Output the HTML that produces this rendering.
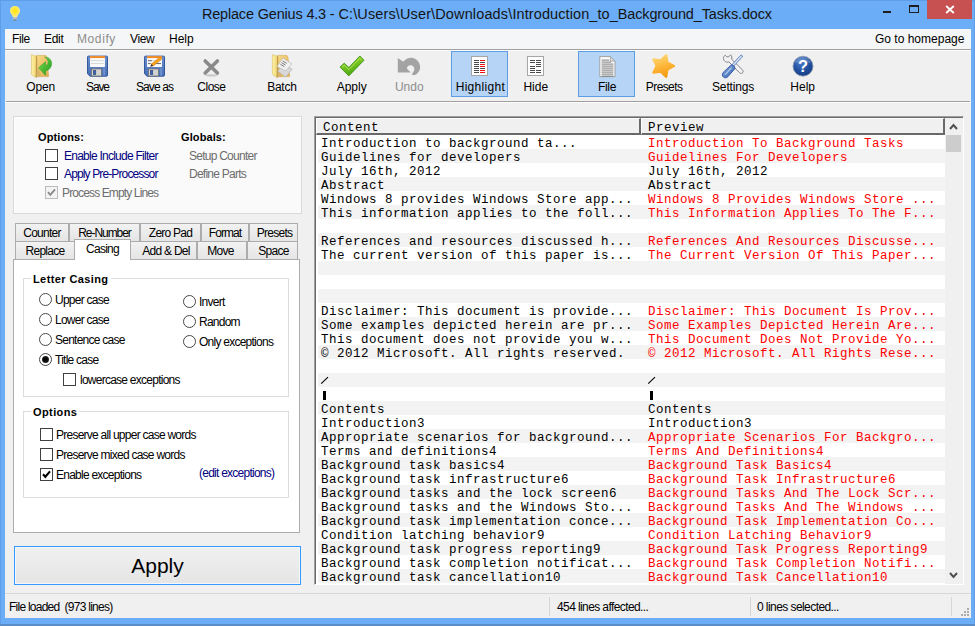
<!DOCTYPE html>
<html lang="en">
<head>
<meta charset="utf-8">
<title>Replace Genius 4.3</title>
<style>
*{box-sizing:border-box;margin:0;padding:0}
html,body{width:975px;height:626px;overflow:hidden}
body{position:relative;background:#6BADF6;font-family:"Liberation Sans",sans-serif;font-size:11px;color:#000;line-height:1}
.abs{position:absolute}
svg{display:block}
#bottomedge{left:0;top:624px;width:975px;height:2px;background:#5B8DC8}
#frame{left:0;top:0;width:975px;height:625px;border:1px solid #5F9EE6;border-bottom:none}
#title{left:0;top:4px;width:975px;height:20px;font-size:14.45px;line-height:20px;white-space:pre;color:#141414}
#title span{position:absolute;top:0}
#client{left:5px;top:29px;width:966px;height:589px;background:#F0F0F0}
#menubar{left:5px;top:29px;width:966px;height:20px;background:#F5F6F7}
.mi{position:absolute;top:32px;font-size:12px;line-height:14px;white-space:nowrap}
#gohome{left:875px}
.hl{left:5px;width:966px;height:1px}
.tl{position:absolute;top:80px;width:80px;height:14px;text-align:center;font-size:12px;line-height:14px;white-space:nowrap}
.tbon{background:#B6D4F6;border:1px solid #5C9DE3}
.dis{color:#8D8D8D}
#optbox{left:13px;top:116px;width:289px;height:98px;background:#FAFAFA;border:1px solid #D9D9D9;box-shadow:inset 1px 1px 0 #FFF}
.cb{position:absolute;width:13px;height:13px;background:#FFF;border:1px solid #404040}
.cb.d{border-color:#BCBCBC;background:#F3F3F3}
.cb svg{position:absolute;left:0;top:0}
.rb{position:absolute;width:13px;height:13px;background:#FFF;border:1px solid #484848;border-radius:50%}
.rb.sel:after{content:"";position:absolute;left:2px;top:2px;width:7px;height:7px;border-radius:50%;background:radial-gradient(#000 0,#111 55%,#777 100%)}
.t{position:absolute;white-space:nowrap;font-size:12px;line-height:13px;letter-spacing:-0.75px;transform:translateY(0.6px)}
.b{font-weight:bold;font-size:11px;letter-spacing:0.1px}
.navy{color:#000080}
.gr{color:#6D6D6D}
.tab{position:absolute;height:18px;border:1px solid #ACACAC;border-bottom:none;background:linear-gradient(#F2F2F2,#E4E4E4);text-align:center;font-size:12px;letter-spacing:-0.75px;line-height:17px;white-space:nowrap}
.tab.sel{background:#FFF}
#tabpage{left:13px;top:259px;width:287px;height:274px;background:#FFF;border:1px solid #ACACAC}
.gb{position:absolute;border:1px solid #DCDCDC}
.gbl{position:absolute;background:#FFF;padding:0 2px;font-weight:bold;font-size:11px;letter-spacing:0.4px;line-height:14px;white-space:nowrap}
#applybtn{left:14px;top:546px;width:287px;height:39px;border:1px solid #3399FF;background:linear-gradient(#F0F0F0,#E5E5E5);text-align:center;font-size:21px;line-height:37px;box-shadow:inset 0 0 0 1px #F4F8FC}
#lv{left:314px;top:116px;width:650px;height:469px;border:1px solid #A0A0A0;border-right-color:#FFF;border-bottom-color:#FFF;background:#FFF}
#lvin{left:315px;top:117px;width:648px;height:467px;border:1px solid #696969;border-right:none;border-bottom:none;background:#FFF}
.hd{position:absolute;top:118px;height:17px;background:#F0F0F0;border-top:1px solid #FFF;border-left:1px solid #FFF;border-right:2px solid #696969;border-bottom:2px solid #696969;font-family:"Liberation Mono",monospace;font-size:12.5px;letter-spacing:0.5px;line-height:14px;white-space:pre;padding-left:6px;padding-top:2px}
.row{position:absolute;left:318px;width:627px;height:14px}
.row.g{background:#F3F3F3}
.c{position:absolute;height:14px;font-family:"Liberation Mono",monospace;font-size:12.5px;letter-spacing:0.5px;line-height:14px;white-space:pre;color:#000;margin-top:2px;margin-left:1px}
.r{color:#FF0000}
#sb{left:945px;top:118px;width:18px;height:466px;background:#F0F0F0}
#thumb{left:946px;top:135px;width:15px;height:17px;background:#CDCDCD}
.sep{position:absolute;top:597px;width:1px;height:19px;background:#D7D7D7}
</style>
</head>
<body>
<div id="frame" class="abs"></div><div id="bottomedge" class="abs"></div>
<div id="title" class="abs"><span style="left:201.9px;letter-spacing:-0.15px">Replace Genius 4.3 - </span><span style="left:338.4px;letter-spacing:0.16px">C:\Users\User\Downloads\</span><span style="left:512.4px;letter-spacing:0.12px">Introduction_to_</span><span style="left:617.8px;letter-spacing:-0.11px">Background_Tasks.docx</span></div>
<svg class="abs" style="left:9px;top:5px" width="12" height="17" viewBox="0 0 12 17" ><defs><radialGradient id="bg" cx="0.5" cy="0.45" r="0.6"><stop offset="0" stop-color="#FFE600"/><stop offset="0.6" stop-color="#FFE75A"/><stop offset="1" stop-color="#FBF0A8"/></radialGradient></defs><path d="M6 1 C2.5 1 1 3.6 1 5.8 C1 8.3 3.2 9.6 3.9 12 L8.1 12 C8.8 9.6 11 8.3 11 5.8 C11 3.6 9.5 1 6 1 Z" fill="url(#bg)"/><rect x="4" y="12" width="4" height="2.6" fill="#B9BDC4"/><rect x="4.6" y="14.4" width="2.8" height="1.2" fill="#7A7F88"/></svg>
<div class="abs" style="left:883px;top:11px;width:8px;height:2px;background:#1E1E1E"></div>
<div class="abs" style="left:909px;top:5px;width:10px;height:8px;border:1px solid #1E1E1E;border-top-width:2px"></div>
<div class="abs" style="left:927px;top:0;width:45px;height:19px;background:#C75050"></div>
<svg class="abs" style="left:945px;top:5px" width="10" height="9" viewBox="0 0 10 9"><path d="M1.2 1 L8.8 8 M8.8 1 L1.2 8" stroke="#FFF" stroke-width="1.9" fill="none"/></svg>
<div id="client" class="abs"></div>
<div id="menubar" class="abs"></div>
<span class="mi " style="left:12px;letter-spacing:-0.4px">File</span>
<span class="mi " style="left:44px;letter-spacing:-0.3px">Edit</span>
<span class="mi dis" style="left:77px;letter-spacing:0.6px">Modify</span>
<span class="mi " style="left:130px;letter-spacing:-0.4px">View</span>
<span class="mi " style="left:169px;letter-spacing:0px">Help</span>
<span class="mi" id="gohome">Go to homepage</span>
<div class="abs hl" style="top:49px;background:#A0A0A0"></div><div class="abs hl" style="top:50px;background:#FDFDFD"></div>
<div class="abs hl" style="top:101px;background:#A0A0A0;left:6px;width:964px"></div><div class="abs hl" style="top:102px;background:#FDFDFD"></div>
<div class="abs tbon" style="left:451px;top:51px;width:57px;height:46px"></div>
<div class="abs tbon" style="left:578px;top:51px;width:57px;height:46px"></div>
<div class="tl " style="left:0.6px;letter-spacing:-0.2px">Open</div>
<svg class="abs" style="left:29px;top:54px" width="24" height="24" viewBox="0 0 24 24" ><defs><linearGradient id="ofa" x1="0" y1="0" x2="1" y2="0"><stop offset="0" stop-color="#FDF3A8"/><stop offset="1" stop-color="#EFD36E"/></linearGradient><linearGradient id="ofb" x1="0" y1="0" x2="1" y2="1"><stop offset="0" stop-color="#F9DA86"/><stop offset="1" stop-color="#E3AE52"/></linearGradient></defs><path d="M7.6 1.4 L16.8 1.4 L18 3.6 L19.6 22.6 L8.6 22.6 Z" fill="url(#ofb)" stroke="#D2A850" stroke-width="0.6"/><path d="M2.4 0.6 L7.6 2.4 L7.2 23.6 L2.4 20.4 Z" fill="url(#ofa)" stroke="#D9BD62" stroke-width="0.6"/><path d="M7.4 13 L10.4 15.5 L12 22.6 L7.2 23.4 Z" fill="#D6B062" opacity="0.7"/><path d="M7.6 2.4 L7.2 23.4" stroke="#B48A3A" stroke-width="0.8" fill="none"/><defs><linearGradient id="og" x1="0" y1="0" x2="1" y2="1"><stop offset="0" stop-color="#7FDB4C"/><stop offset="1" stop-color="#1E9A1E"/></linearGradient></defs><path d="M15.6 3.2 C20.8 2.6 23.6 7.4 22.4 11.6 C21.6 14.6 19.4 16.4 16.6 16.8 L16.6 21.4 L9.6 13.8 L16.6 7.6 L16.6 11.4 C18.6 11 19.6 9.2 19 7.2 C18.6 5.6 17.4 4.2 15.6 3.2 Z" fill="url(#og)" stroke="#2C9E2A" stroke-width="0.5"/></svg>
<div class="tl " style="left:57.4px;letter-spacing:-1.2px">Save</div>
<svg class="abs" style="left:86.6px;top:55.2px" width="21.965" height="22.92" viewBox="0 0 23 24" ><defs><linearGradient id="sfl" x1="0" y1="0" x2="0" y2="1"><stop offset="0" stop-color="#6C90CE"/><stop offset="1" stop-color="#466DB4"/></linearGradient></defs><path d="M1.5 1.2 L20.5 1.2 Q21.5 1.2 21.5 2.2 L21.5 21.2 Q21.5 22.2 20.5 22.2 L3.2 22.2 L0.5 19.6 L0.5 2.2 Q0.5 1.2 1.5 1.2 Z" fill="url(#sfl)" stroke="#2E5398" stroke-width="1"/><rect x="3.2" y="1.6" width="15.6" height="11" fill="#FAFAFA"/><rect x="3.2" y="1.2" width="15.6" height="2" fill="#F28A1E"/><rect x="4.2" y="5.6" width="13.6" height="0.8" fill="#C9D0CC"/><rect x="4.2" y="8.6" width="13.6" height="0.8" fill="#C9D0CC"/><rect x="4.6" y="14.6" width="10.6" height="7.4" fill="#D2D2D0" stroke="#6F6F6F" stroke-width="0.8"/><rect x="6.6" y="16.2" width="2.6" height="4.4" fill="#3E64AA" stroke="#26407A" stroke-width="0.6"/><rect x="17" y="14" width="2" height="7.6" fill="#7EA0D8" opacity="0.7"/></svg>
<div class="tl " style="left:114.5px;letter-spacing:-0.9px">Save as</div>
<svg class="abs" style="left:143.6px;top:55.2px" width="21.965" height="22.92" viewBox="0 0 23 24" ><defs><linearGradient id="afl" x1="0" y1="0" x2="0" y2="1"><stop offset="0" stop-color="#6C90CE"/><stop offset="1" stop-color="#466DB4"/></linearGradient></defs><path d="M1.5 1.2 L20.5 1.2 Q21.5 1.2 21.5 2.2 L21.5 21.2 Q21.5 22.2 20.5 22.2 L3.2 22.2 L0.5 19.6 L0.5 2.2 Q0.5 1.2 1.5 1.2 Z" fill="url(#afl)" stroke="#2E5398" stroke-width="1"/><rect x="3.2" y="1.6" width="15.6" height="11" fill="#FAFAFA"/><rect x="3.2" y="1.2" width="15.6" height="2" fill="#F28A1E"/><rect x="4.2" y="5.6" width="13.6" height="0.8" fill="#C9D0CC"/><rect x="4.2" y="8.6" width="13.6" height="0.8" fill="#C9D0CC"/><rect x="4.6" y="14.6" width="10.6" height="7.4" fill="#D2D2D0" stroke="#6F6F6F" stroke-width="0.8"/><rect x="6.6" y="16.2" width="2.6" height="4.4" fill="#3E64AA" stroke="#26407A" stroke-width="0.6"/><rect x="17" y="14" width="2" height="7.6" fill="#7EA0D8" opacity="0.7"/><path d="M16.6 2.2 L18.8 4.2 L9.8 11.6 L7.6 9.4 Z" fill="#F5A21E" stroke="#D87A10" stroke-width="0.5"/><path d="M7.6 9.4 L9.8 11.6 L6.6 12.4 Z" fill="#3A2A1A"/><rect x="4.2" y="5.6" width="4" height="0.9" fill="#555"/><rect x="4.2" y="8.6" width="2.6" height="0.9" fill="#555"/><rect x="13" y="8.6" width="4.8" height="0.9" fill="#555"/></svg>
<div class="tl " style="left:171.4px;letter-spacing:-0.5px">Close</div>
<svg class="abs" style="left:201px;top:56px" width="21" height="22" viewBox="0 0 21 22" ><ellipse cx="10.4" cy="19.4" rx="6" ry="1.2" fill="#C8C8C8"/><path d="M4.2 5 L16.4 17 M16.4 5 L4.2 17" stroke="#8A8A8A" stroke-width="3.6" stroke-linecap="round" fill="none"/></svg>
<div class="tl " style="left:241.9px;letter-spacing:-0.25px">Batch</div>
<svg class="abs" style="left:270px;top:54px" width="24" height="24" viewBox="0 0 24 24" ><defs><linearGradient id="bfa" x1="0" y1="0" x2="1" y2="0"><stop offset="0" stop-color="#FDF3A8"/><stop offset="1" stop-color="#EFD36E"/></linearGradient><linearGradient id="bfb" x1="0" y1="0" x2="1" y2="1"><stop offset="0" stop-color="#F9DA86"/><stop offset="1" stop-color="#E3AE52"/></linearGradient></defs><path d="M7.6 1.4 L16.8 1.4 L18 3.6 L19.6 22.6 L8.6 22.6 Z" fill="url(#bfb)" stroke="#D2A850" stroke-width="0.6"/><path d="M2.4 0.6 L7.6 2.4 L7.2 23.6 L2.4 20.4 Z" fill="url(#bfa)" stroke="#D9BD62" stroke-width="0.6"/><path d="M7.4 13 L10.4 15.5 L12 22.6 L7.2 23.4 Z" fill="#D6B062" opacity="0.7"/><path d="M7.6 2.4 L7.2 23.4" stroke="#B48A3A" stroke-width="0.8" fill="none"/><path d="M7.6 17 L13.4 11.6 L22.2 15 L15.6 23.2 Z" fill="#D8D8D8" stroke="#B0B0B0" stroke-width="0.6"/><path d="M12.9 3.9 L21.9 9.9 L15.7 17 L6.9 12.4 Z" fill="#EFEFEF" stroke="#B0B0B0" stroke-width="0.6"/><path d="M11.6 8.6 L15.4 11 M10.4 10.2 L14.2 12.6 M12.8 7 L16.6 9.4" stroke="#6A6A6A" stroke-width="0.9" fill="none"/></svg>
<div class="tl " style="left:311.7px;letter-spacing:0px">Apply</div>
<svg class="abs" style="left:339px;top:54px" width="26" height="24" viewBox="0 0 26 24" ><defs><linearGradient id="ag" x1="0" y1="0" x2="0.4" y2="1"><stop offset="0" stop-color="#A4E030"/><stop offset="1" stop-color="#4CA812"/></linearGradient></defs><path d="M1 13.1 L5.2 9.2 L9.8 13.5 L20.9 2 L25 6.2 L9.8 21.9 Z" fill="url(#ag)" stroke="#2E8A0C" stroke-width="0.8" stroke-linejoin="round"/><path d="M3.2 13 L5.2 11.2 L9.8 15.6 L20.9 4.2 L22.8 6.2" stroke="#C4EE6A" stroke-width="1" fill="none" opacity="0.8"/></svg>
<div class="tl dis" style="left:369.3px;letter-spacing:0px">Undo</div>
<svg class="abs" style="left:397px;top:57px" width="24" height="19" viewBox="0 0 24 19" ><path d="M0.8 0.9 L0.8 15.6 L13.8 15.6 L9.8 11.4 C10.4 8.6 13.2 7.6 15.4 8.8 C17.6 10 17.8 12.6 16.6 14.4 L14.6 17.4 L17.2 18.2 C22 16.4 24.2 11.8 22.6 7.2 C21 2.2 15.2 -0.6 10.4 1.6 C8.6 2.4 7.4 3.4 6.4 4.8 Z" fill="#A3A3A3"/></svg>
<div class="tl " style="left:440.4px;letter-spacing:0.3px">Highlight</div>
<svg class="abs" style="left:471px;top:56px" width="17" height="20" viewBox="0 0 17 20" ><rect x="0.5" y="0.5" width="16" height="19" fill="#FEFEFE" stroke="#A6A6A6" stroke-width="1"/><rect x="3" y="4" width="5" height="1" fill="#4A4A4A"/><rect x="9" y="4" width="5" height="1" fill="#F01010"/><rect x="3" y="6" width="5" height="1" fill="#4A4A4A"/><rect x="9" y="6" width="5" height="1" fill="#4A4A4A"/><rect x="3" y="8" width="5" height="1" fill="#4A4A4A"/><rect x="9" y="8" width="5" height="1" fill="#F01010"/><rect x="3" y="10" width="5" height="1" fill="#4A4A4A"/><rect x="9" y="10" width="5" height="1" fill="#F01010"/><rect x="3" y="12" width="5" height="1" fill="#4A4A4A"/><rect x="9" y="12" width="5" height="1" fill="#4A4A4A"/><rect x="3" y="14" width="5" height="1" fill="#4A4A4A"/><rect x="9" y="14" width="5" height="1" fill="#F01010"/><rect x="3" y="16" width="5" height="1" fill="#4A4A4A"/><rect x="9" y="16" width="5" height="1" fill="#F01010"/></svg>
<div class="tl " style="left:495.8px;letter-spacing:0px">Hide</div>
<svg class="abs" style="left:527px;top:56px" width="17" height="20" viewBox="0 0 17 20" ><rect x="0.5" y="0.5" width="16" height="19" fill="#FEFEFE" stroke="#A6A6A6" stroke-width="1"/><rect x="3" y="4" width="5" height="1" fill="#4A4A4A"/><rect x="9" y="4" width="5" height="1" fill="#4A4A4A"/><rect x="3" y="6" width="5" height="1" fill="#4A4A4A"/><rect x="9" y="6" width="5" height="1" fill="#4A4A4A"/><rect x="9" y="8" width="5" height="1" fill="#4A4A4A"/><rect x="3" y="10" width="5" height="1" fill="#4A4A4A"/><rect x="9" y="10" width="5" height="1" fill="#4A4A4A"/><rect x="3" y="12" width="5" height="1" fill="#4A4A4A"/><rect x="3" y="14" width="5" height="1" fill="#4A4A4A"/><rect x="9" y="14" width="5" height="1" fill="#4A4A4A"/><rect x="3" y="16" width="5" height="1" fill="#4A4A4A"/><rect x="9" y="16" width="5" height="1" fill="#4A4A4A"/></svg>
<div class="tl " style="left:567.0px;letter-spacing:-0.35px">File</div>
<svg class="abs" style="left:598.5px;top:56px" width="17" height="22" viewBox="0 0 17 22" ><path d="M0.8 0.6 L11.4 0.6 L16 5.2 L16 20.6 L0.8 20.6 Z" fill="#FCFCFC" stroke="#9A9A9A" stroke-width="0.9"/><path d="M11.4 0.6 L11.4 5.2 L16 5.2 Z" fill="#DADADA" stroke="#9E9E9E" stroke-width="0.7"/><rect x="2.6" y="3.6" width="7.6" height="1" fill="#7C7C7C"/><rect x="2.6" y="5.6" width="9.6" height="1" fill="#7C7C7C"/><rect x="2.6" y="7.6" width="11.8" height="1" fill="#7C7C7C"/><rect x="2.6" y="9.6" width="11.8" height="1" fill="#7C7C7C"/><rect x="2.6" y="11.6" width="11.8" height="1" fill="#7C7C7C"/><rect x="2.6" y="13.6" width="11.8" height="1" fill="#7C7C7C"/><rect x="2.6" y="15.6" width="11.8" height="1" fill="#7C7C7C"/><rect x="2.6" y="17.6" width="11.8" height="1" fill="#7C7C7C"/><rect x="2.6" y="19.6" width="11.8" height="1" fill="#7C7C7C"/></svg>
<div class="tl " style="left:624.1px;letter-spacing:-0.6px">Presets</div>
<svg class="abs" style="left:650px;top:53px" width="26" height="26" viewBox="0 0 26 26" ><defs><linearGradient id="sg" x1="0.3" y1="0" x2="0.6" y2="1"><stop offset="0" stop-color="#FFD873"/><stop offset="0.55" stop-color="#FDB335"/><stop offset="1" stop-color="#F39A12"/></linearGradient></defs><path d="M16.1 2.3 L17.4 9.5 L23.9 13.0 L17.4 16.5 L16.1 23.7 L10.8 18.6 L3.5 19.6 L6.7 13.0 L3.5 6.4 L10.8 7.4 Z" fill="url(#sg)" stroke="url(#sg)" stroke-width="2.4" stroke-linejoin="round"/></svg>
<div class="tl " style="left:693.1px;letter-spacing:-0.15px">Settings</div>
<svg class="abs" style="left:721px;top:53px" width="24" height="26" viewBox="0 0 24 26" ><defs><linearGradient id="tg" x1="0" y1="0" x2="1" y2="1"><stop offset="0" stop-color="#8FB2E4"/><stop offset="1" stop-color="#2F5FAE"/></linearGradient></defs><path d="M4.2 2.2 C2.2 3.4 1.8 6.2 3.6 8 C4.8 9.2 6.4 9.4 7.8 8.8 L18.6 19.8 C19.6 20.8 21.2 20.6 21.8 19.6 C22.4 18.6 22.2 17.6 21.4 16.8 L10.6 6.2 C11.2 4.6 10.8 3 9.6 1.8 L7.4 4 L5.8 3.8 Z" fill="#F2F2F2" stroke="#7E8288" stroke-width="1" stroke-linejoin="round"/><path d="M12.6 13.2 L20.6 4.6 L21.6 3 L20.2 2 L18.8 3.2 L11 11.8 Z" fill="#DDE6F2" stroke="#3E68AE" stroke-width="0.8"/><path d="M2.2 19.4 C0.8 21 1.2 23.2 2.6 24.2 C4 25.2 5.8 24.8 6.8 23.8 L13.8 15.8 C14.4 13.8 12.2 11.6 10.2 12 Z" fill="url(#tg)" stroke="#2C559E" stroke-width="0.9"/><path d="M4.2 21.6 L10.6 14.6" stroke="#C9DBF4" stroke-width="1.2" opacity="0.8" fill="none"/></svg>
<div class="tl " style="left:762.7px;letter-spacing:0px">Help</div>
<svg class="abs" style="left:792px;top:55px" width="22" height="22" viewBox="0 0 22 22" ><defs><radialGradient id="hg" cx="0.4" cy="0.3" r="0.8"><stop offset="0" stop-color="#4F7FCC"/><stop offset="0.55" stop-color="#1F4F9E"/><stop offset="1" stop-color="#163C7E"/></radialGradient></defs><circle cx="11" cy="11.2" r="10" fill="url(#hg)" stroke="#8E9AB0" stroke-width="0.8"/><path d="M2.6 8.6 C4 3.6 8 1.8 11 1.8 C14 1.8 18 3.6 19.4 8.6 C15 6.4 7 6.4 2.6 8.6 Z" fill="#FFFFFF" opacity="0.18"/><text x="11" y="17.2" text-anchor="middle" font-family="Liberation Sans, sans-serif" font-weight="bold" font-size="16.5" fill="#FFF">?</text></svg>
<div id="optbox" class="abs"></div>
<div class="t b" style="left:38px;top:130px">Options:</div>
<div class="t b" style="left:181px;top:130px">Globals:</div>
<div class="cb" style="left:45px;top:149px"></div><div class="t navy" style="left:64px;top:149px">Enable Include Filter</div>
<div class="cb" style="left:45px;top:167px"></div><div class="t navy" style="left:64px;top:167px;letter-spacing:-0.87px">Apply Pre-Processor</div>
<div class="cb d" style="left:45px;top:186px"><svg width="11" height="11" viewBox="0 0 11 11"><path d="M2 5.2 L4.3 7.8 L9 2.4" stroke="#8A8A8A" stroke-width="1.8" fill="none"/></svg></div><div class="t gr" style="left:62px;top:186px;letter-spacing:-0.87px">Process Empty Lines</div>
<div class="t gr" style="left:189px;top:149px">Setup Counter</div>
<div class="t gr" style="left:189px;top:167px">Define Parts</div>
<div class="tab" style="left:15px;top:223px;width:54px;height:19px;line-height:18px;">Counter</div>
<div class="tab" style="left:69px;top:223px;width:71px;height:19px;line-height:18px;letter-spacing:-1.05px">Re-Number</div>
<div class="tab" style="left:140px;top:223px;width:61px;height:19px;line-height:18px;">Zero Pad</div>
<div class="tab" style="left:201px;top:223px;width:48px;height:19px;line-height:18px;letter-spacing:-0.95px">Format</div>
<div class="tab" style="left:249px;top:223px;width:49px;height:19px;line-height:18px;padding-left:2px">Presets</div>
<div class="tab" style="left:15px;top:241px;width:60px;height:19px;line-height:19px;">Replace</div>
<div class="tab" style="left:130px;top:241px;width:67px;height:19px;line-height:19px;padding-left:5px">Add &amp; Del</div>
<div class="tab" style="left:197px;top:241px;width:50px;height:19px;line-height:19px;padding-right:3px">Move</div>
<div class="tab" style="left:247px;top:241px;width:51px;height:19px;line-height:19px;padding-left:2px">Space</div>
<div id="tabpage" class="abs"></div>
<div class="tab sel" style="left:74px;top:239px;width:57px;height:21px;line-height:18px">Casing</div>
<div class="gb" style="left:23px;top:278px;width:266px;height:119px"></div>
<div class="gbl" style="left:31px;top:272px">Letter Casing</div>
<div class="rb " style="left:39px;top:293px"></div><div class="t" style="left:55px;top:293px">Upper case</div>
<div class="rb " style="left:39px;top:313px"></div><div class="t" style="left:55px;top:313px">Lower case</div>
<div class="rb " style="left:39px;top:333px"></div><div class="t" style="left:55px;top:333px">Sentence case</div>
<div class="rb sel" style="left:39px;top:353px"></div><div class="t" style="left:55px;top:353px">Title case</div>
<div class="rb" style="left:183px;top:295px"></div><div class="t" style="left:199px;top:295px">Invert</div>
<div class="rb" style="left:183px;top:315px"></div><div class="t" style="left:199px;top:315px">Random</div>
<div class="rb" style="left:183px;top:335px"></div><div class="t" style="left:199px;top:335px">Only exceptions</div>
<div class="cb" style="left:63px;top:373px"></div><div class="t" style="left:80px;top:373px">lowercase exceptions</div>
<div class="gb" style="left:23px;top:411px;width:266px;height:87px"></div>
<div class="gbl" style="left:31px;top:405px">Options</div>
<div class="cb" style="left:40px;top:428px"></div><div class="t" style="left:56px;top:428px">Preserve all upper case words</div>
<div class="cb" style="left:40px;top:448px"></div><div class="t" style="left:56px;top:448px">Preserve mixed case words</div>
<div class="cb" style="left:40px;top:468px"><svg width="11" height="11" viewBox="0 0 11 11"><path d="M2 5.2 L4.3 7.8 L9 2.4" stroke="#000" stroke-width="2.1" fill="none"/></svg></div><div class="t" style="left:56px;top:468px">Enable exceptions</div>
<div class="t navy" style="left:199px;top:466px">(edit exceptions)</div>
<div id="applybtn" class="abs">Apply</div>
<div id="lv" class="abs"></div><div id="lvin" class="abs"></div>
<div class="hd" style="left:316px;width:325px">Content</div>
<div class="hd" style="left:641px;width:304px">Preview</div>
<div id="sb" class="abs"></div><div id="thumb" class="abs"></div>
<svg class="abs" style="left:949px;top:123px" width="9" height="7" viewBox="0 0 9 7"><path d="M1 6 L4.5 2 L8 6" stroke="#505050" stroke-width="2" fill="none"/></svg>
<svg class="abs" style="left:949px;top:572px" width="9" height="7" viewBox="0 0 9 7"><path d="M1 1 L4.5 5 L8 1" stroke="#505050" stroke-width="2" fill="none"/></svg>
<div class="row g" style="top:149px"></div>
<div class="row g" style="top:177px"></div>
<div class="row g" style="top:205px"></div>
<div class="row g" style="top:233px"></div>
<div class="row g" style="top:261px"></div>
<div class="row g" style="top:289px"></div>
<div class="row g" style="top:317px"></div>
<div class="row g" style="top:345px"></div>
<div class="row g" style="top:373px"></div>
<div class="row g" style="top:401px"></div>
<div class="row g" style="top:429px"></div>
<div class="row g" style="top:457px"></div>
<div class="row g" style="top:485px"></div>
<div class="row g" style="top:513px"></div>
<div class="row g" style="top:541px"></div>
<div class="row g" style="top:569px"></div>
<div class="c " style="left:320px;top:135px">Introduction to background ta...</div>
<div class="c r" style="left:647px;top:135px">Introduction To Background Tasks</div>
<div class="c " style="left:320px;top:149px">Guidelines for developers</div>
<div class="c r" style="left:647px;top:149px">Guidelines For Developers</div>
<div class="c " style="left:320px;top:163px">July 16th, 2012</div>
<div class="c " style="left:647px;top:163px">July 16th, 2012</div>
<div class="c " style="left:320px;top:177px">Abstract</div>
<div class="c " style="left:647px;top:177px">Abstract</div>
<div class="c " style="left:320px;top:191px">Windows 8 provides Windows Store app...</div>
<div class="c r" style="left:647px;top:191px">Windows 8 Provides Windows Store ...</div>
<div class="c " style="left:320px;top:205px">This information applies to the foll...</div>
<div class="c r" style="left:647px;top:205px">This Information Applies To The F...</div>
<div class="c " style="left:320px;top:233px">References and resources discussed h...</div>
<div class="c r" style="left:647px;top:233px">References And Resources Discusse...</div>
<div class="c " style="left:320px;top:247px">The current version of this paper is...</div>
<div class="c r" style="left:647px;top:247px">The Current Version Of This Paper...</div>
<div class="c " style="left:320px;top:303px">Disclaimer: This document is provide...</div>
<div class="c r" style="left:647px;top:303px">Disclaimer: This Document Is Prov...</div>
<div class="c " style="left:320px;top:317px">Some examples depicted herein are pr...</div>
<div class="c r" style="left:647px;top:317px">Some Examples Depicted Herein Are...</div>
<div class="c " style="left:320px;top:331px">This document does not provide you w...</div>
<div class="c r" style="left:647px;top:331px">This Document Does Not Provide Yo...</div>
<div class="c " style="left:320px;top:345px">© 2012 Microsoft. All rights reserved.</div>
<div class="c r" style="left:647px;top:345px">© 2012 Microsoft. All Rights Rese...</div>
<svg class="abs" style="left:320px;top:373px" width="10" height="14" viewBox="0 0 10 14"><path d="M1.2 10.6 L8 4.1" stroke="#000" stroke-width="1.1" fill="none"/></svg>
<svg class="abs" style="left:647px;top:373px" width="10" height="14" viewBox="0 0 10 14"><path d="M1.2 10.6 L8 4.1" stroke="#000" stroke-width="1.1" fill="none"/></svg>
<div class="abs" style="left:323px;top:391px;width:3px;height:9px;background:#000"></div>
<div class="abs" style="left:650px;top:391px;width:3px;height:9px;background:#000"></div>
<div class="c " style="left:320px;top:401px">Contents</div>
<div class="c " style="left:647px;top:401px">Contents</div>
<div class="c " style="left:320px;top:415px">Introduction3</div>
<div class="c " style="left:647px;top:415px">Introduction3</div>
<div class="c " style="left:320px;top:429px">Appropriate scenarios for background...</div>
<div class="c r" style="left:647px;top:429px">Appropriate Scenarios For Backgro...</div>
<div class="c " style="left:320px;top:443px">Terms and definitions4</div>
<div class="c r" style="left:647px;top:443px">Terms And Definitions4</div>
<div class="c " style="left:320px;top:457px">Background task basics4</div>
<div class="c r" style="left:647px;top:457px">Background Task Basics4</div>
<div class="c " style="left:320px;top:471px">Background task infrastructure6</div>
<div class="c r" style="left:647px;top:471px">Background Task Infrastructure6</div>
<div class="c " style="left:320px;top:485px">Background tasks and the lock screen6</div>
<div class="c r" style="left:647px;top:485px">Background Tasks And The Lock Scr...</div>
<div class="c " style="left:320px;top:499px">Background tasks and the Windows Sto...</div>
<div class="c r" style="left:647px;top:499px">Background Tasks And The Windows ...</div>
<div class="c " style="left:320px;top:513px">Background task implementation conce...</div>
<div class="c r" style="left:647px;top:513px">Background Task Implementation Co...</div>
<div class="c " style="left:320px;top:527px">Condition latching behavior9</div>
<div class="c r" style="left:647px;top:527px">Condition Latching Behavior9</div>
<div class="c " style="left:320px;top:541px">Background task progress reporting9</div>
<div class="c r" style="left:647px;top:541px">Background Task Progress Reporting9</div>
<div class="c " style="left:320px;top:555px">Background task completion notificat...</div>
<div class="c r" style="left:647px;top:555px">Background Task Completion Notifi...</div>
<div class="c " style="left:320px;top:569px">Background task cancellation10</div>
<div class="c r" style="left:647px;top:569px">Background Task Cancellation10</div>
<div class="abs hl" style="top:593px;background:#D7D7D7"></div>
<div class="t" style="left:9px;top:600px">File loaded&nbsp; (973 lines)</div>
<div class="sep" style="left:549px"></div><div class="t" style="left:557px;top:600px;letter-spacing:-0.6px">454 lines affected...</div>
<div class="sep" style="left:750px"></div><div class="t" style="left:757px;top:600px;letter-spacing:-0.57px">0 lines selected...</div>
<div class="sep" style="left:951px"></div>
<svg class="abs" style="left:960px;top:607px" width="10" height="10" viewBox="0 0 10 10" ><g fill="#ADADAD"><rect x="7" y="1" width="2" height="2"/><rect x="4" y="4" width="2" height="2"/><rect x="7" y="4" width="2" height="2"/><rect x="1" y="7" width="2" height="2"/><rect x="4" y="7" width="2" height="2"/><rect x="7" y="7" width="2" height="2"/></g></svg>
</body>
</html>
